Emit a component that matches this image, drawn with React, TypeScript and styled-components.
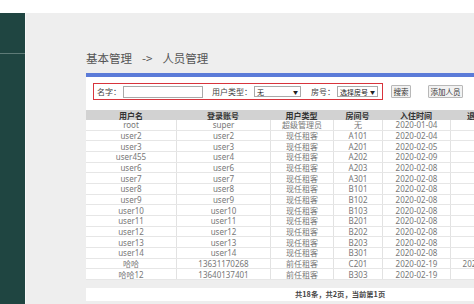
import React from 'react';
import styled, { createGlobalStyle } from 'styled-components';

const GlobalStyle = createGlobalStyle`
  html, body {
    margin: 0;
    padding: 0;
    background: #eeeeee;
  }
  body {
    width: 474px;
    height: 304px;
    overflow: hidden;
    font-family: "Noto Sans", "Noto Sans CJK SC", sans-serif;
  }
`;

const Page = styled.div`
  display: flex;
  flex-direction: column;
  width: 474px;
  height: 304px;
  overflow: hidden;
`;

const TopBar = styled.div`
  height: 13px;
  background: #ffffff;
  flex-shrink: 0;
`;

const Body = styled.div`
  display: flex;
  flex: 1;
  min-height: 0;
`;

const Sidebar = styled.div`
  width: 25px;
  flex-shrink: 0;
  background: #1f4541;
  border-right: 1px solid #f7f7f7;
`;

const SidebarHead = styled.div`
  height: 40px;
  border-bottom: 1px solid #5e7b77;
`;

const Main = styled.div`
  flex: 1;
  min-width: 0;
  padding: 38px 0 0 60px;
  overflow: hidden;
`;

const Title = styled.div`
  display: flex;
  gap: 10px;
  height: 14px;
  line-height: 14px;
  font-size: 11.5px;
  color: #555555;
  white-space: nowrap;
  font-family: "Noto Sans CJK SC", sans-serif;
`;

const BlueBar = styled.div`
  height: 4px;
  margin-top: 8px;
  width: 430px;
  background: #5b7bd8;
`;

const Panel = styled.div`
  width: 430px;
  background: #ffffff;
  padding-top: 6px;
`;

const FilterRow = styled.div`
  display: flex;
  align-items: center;
  padding-left: 7px;
  margin-bottom: 10px;
`;

const SearchBox = styled.div`
  display: flex;
  align-items: center;
  width: 285px;
  height: 15px;
  border: 1px solid #d8343c;
  padding-left: 3px;
  font-size: 8px;
  color: #444;
  font-family: "Noto Sans CJK SC", sans-serif;
  white-space: nowrap;
`;

const Label = styled.span<{ $gap?: number }>`
  margin-left: ${(p) => p.$gap ?? 0}px;
  margin-right: 2px;
`;

const TextInput = styled.div`
  width: 78px;
  height: 10px;
  border: 1px solid #a9a9a9;
  background: #fff;
`;

const Select = styled.div<{ $w: number }>`
  display: flex;
  align-items: center;
  justify-content: space-between;
  width: ${(p) => p.$w}px;
  height: 11px;
  border: 1px solid #a9a9a9;
  background: #fff;
  padding: 0 2px 0 2px;
  box-sizing: border-box;
  font-size: 7px;
  color: #222;
  overflow: hidden;
`;

const Arrow = styled.span`
  font-size: 5px;
  color: #222;
  margin-left: 1px;
`;

const Button = styled.div<{ $w: number; $gap: number }>`
  display: flex;
  align-items: center;
  justify-content: center;
  width: ${(p) => p.$w}px;
  height: 13px;
  margin-left: ${(p) => p.$gap}px;
  box-sizing: border-box;
  border: 1px solid #b8b8b8;
  background: #f2f2f2;
  border-radius: 1px;
  font-size: 7.5px;
  color: #333;
  font-family: "Noto Sans CJK SC", sans-serif;
`;

const Row = styled.div<{ $head?: boolean }>`
  display: grid;
  grid-template-columns: 90px 94px 63px 49px 68px 66px;
  height: ${(p) => (p.$head ? '10px' : '10.67px')};
  background: ${(p) => (p.$head ? '#d2d2d2' : '#ffffff')};
  box-sizing: border-box;
  border-bottom: ${(p) => (p.$head ? 'none' : '1px solid #e6e6e6')};
`;

const Cell = styled.div<{ $head?: boolean }>`
  display: flex;
  align-items: center;
  justify-content: center;
  border-left: ${(p) => (p.$head ? 'none' : '1px solid #e2e2e2')};
  font-size: ${(p) => (p.$head ? '8px' : '8px')};
  font-weight: ${(p) => (p.$head ? 700 : 400)};
  color: ${(p) => (p.$head ? '#333333' : '#777777')};
  white-space: nowrap;
  overflow: hidden;
  &:first-child {
    border-left: none;
  }
`;

const Pager = styled.div`
  width: 430px;
  height: 13px;
  margin-top: 8px;
  background: #ffffff;
  padding-left: 209px;
  box-sizing: border-box;
  display: flex;
  align-items: center;
  font-size: 7.3px;
  font-weight: 700;
  color: #444;
  font-family: "Noto Sans CJK SC", sans-serif;
  white-space: nowrap;
`;

const headers = ['用户名', '登录账号', '用户类型', '房间号', '入住时间', '退房时间'];

const rows: string[][] = [
  ['root', 'super', '超级管理员', '无', '2020-01-04', ''],
  ['user2', 'user2', '现任租客', 'A101', '2020-02-04', ''],
  ['user3', 'user3', '现任租客', 'A201', '2020-02-05', ''],
  ['user455', 'user4', '现任租客', 'A202', '2020-02-09', ''],
  ['user6', 'user6', '现任租客', 'A203', '2020-02-08', ''],
  ['user7', 'user7', '现任租客', 'A301', '2020-02-08', ''],
  ['user8', 'user8', '现任租客', 'B101', '2020-02-08', ''],
  ['user9', 'user9', '现任租客', 'B102', '2020-02-08', ''],
  ['user10', 'user10', '现任租客', 'B103', '2020-02-08', ''],
  ['user11', 'user11', '现任租客', 'B201', '2020-02-08', ''],
  ['user12', 'user12', '现任租客', 'B202', '2020-02-08', ''],
  ['user13', 'user13', '现任租客', 'B203', '2020-02-08', ''],
  ['user14', 'user14', '现任租客', 'B301', '2020-02-08', ''],
  ['哈哈', '13631170268', '前任租客', 'C201', '2020-02-19', '2020-02-20'],
  ['哈哈12', '13640137401', '前任租客', 'B303', '2020-02-19', ''],
];

export default function App() {
  return (
    <Page>
      <GlobalStyle />
      <TopBar />
      <Body>
        <Sidebar>
          <SidebarHead />
        </Sidebar>
        <Main>
          <Title>
            <span>基本管理</span>
            <span>-&gt;</span>
            <span>人员管理</span>
          </Title>
          <BlueBar />
          <Panel>
            <FilterRow>
              <SearchBox>
                <Label>名字：</Label>
                <TextInput />
                <Label $gap={9}>用户类型：</Label>
                <Select $w={47}>
                  <span>无</span>
                  <Arrow>▼</Arrow>
                </Select>
                <Label $gap={10}>房号：</Label>
                <Select $w={41}>
                  <span>选择房号</span>
                  <Arrow>▼</Arrow>
                </Select>
              </SearchBox>
              <Button $w={20} $gap={8}>搜索</Button>
              <Button $w={35} $gap={17}>添加人员</Button>
            </FilterRow>
            <Row $head>
              {headers.map((h) => (
                <Cell $head key={h}>{h}</Cell>
              ))}
            </Row>
            {rows.map((r, i) => (
              <Row key={i}>
                {r.map((c, j) => (
                  <Cell key={j}>{c}</Cell>
                ))}
              </Row>
            ))}
          </Panel>
          <Pager>共18条，共2页，当前第1页</Pager>
        </Main>
      </Body>
    </Page>
  );
}
